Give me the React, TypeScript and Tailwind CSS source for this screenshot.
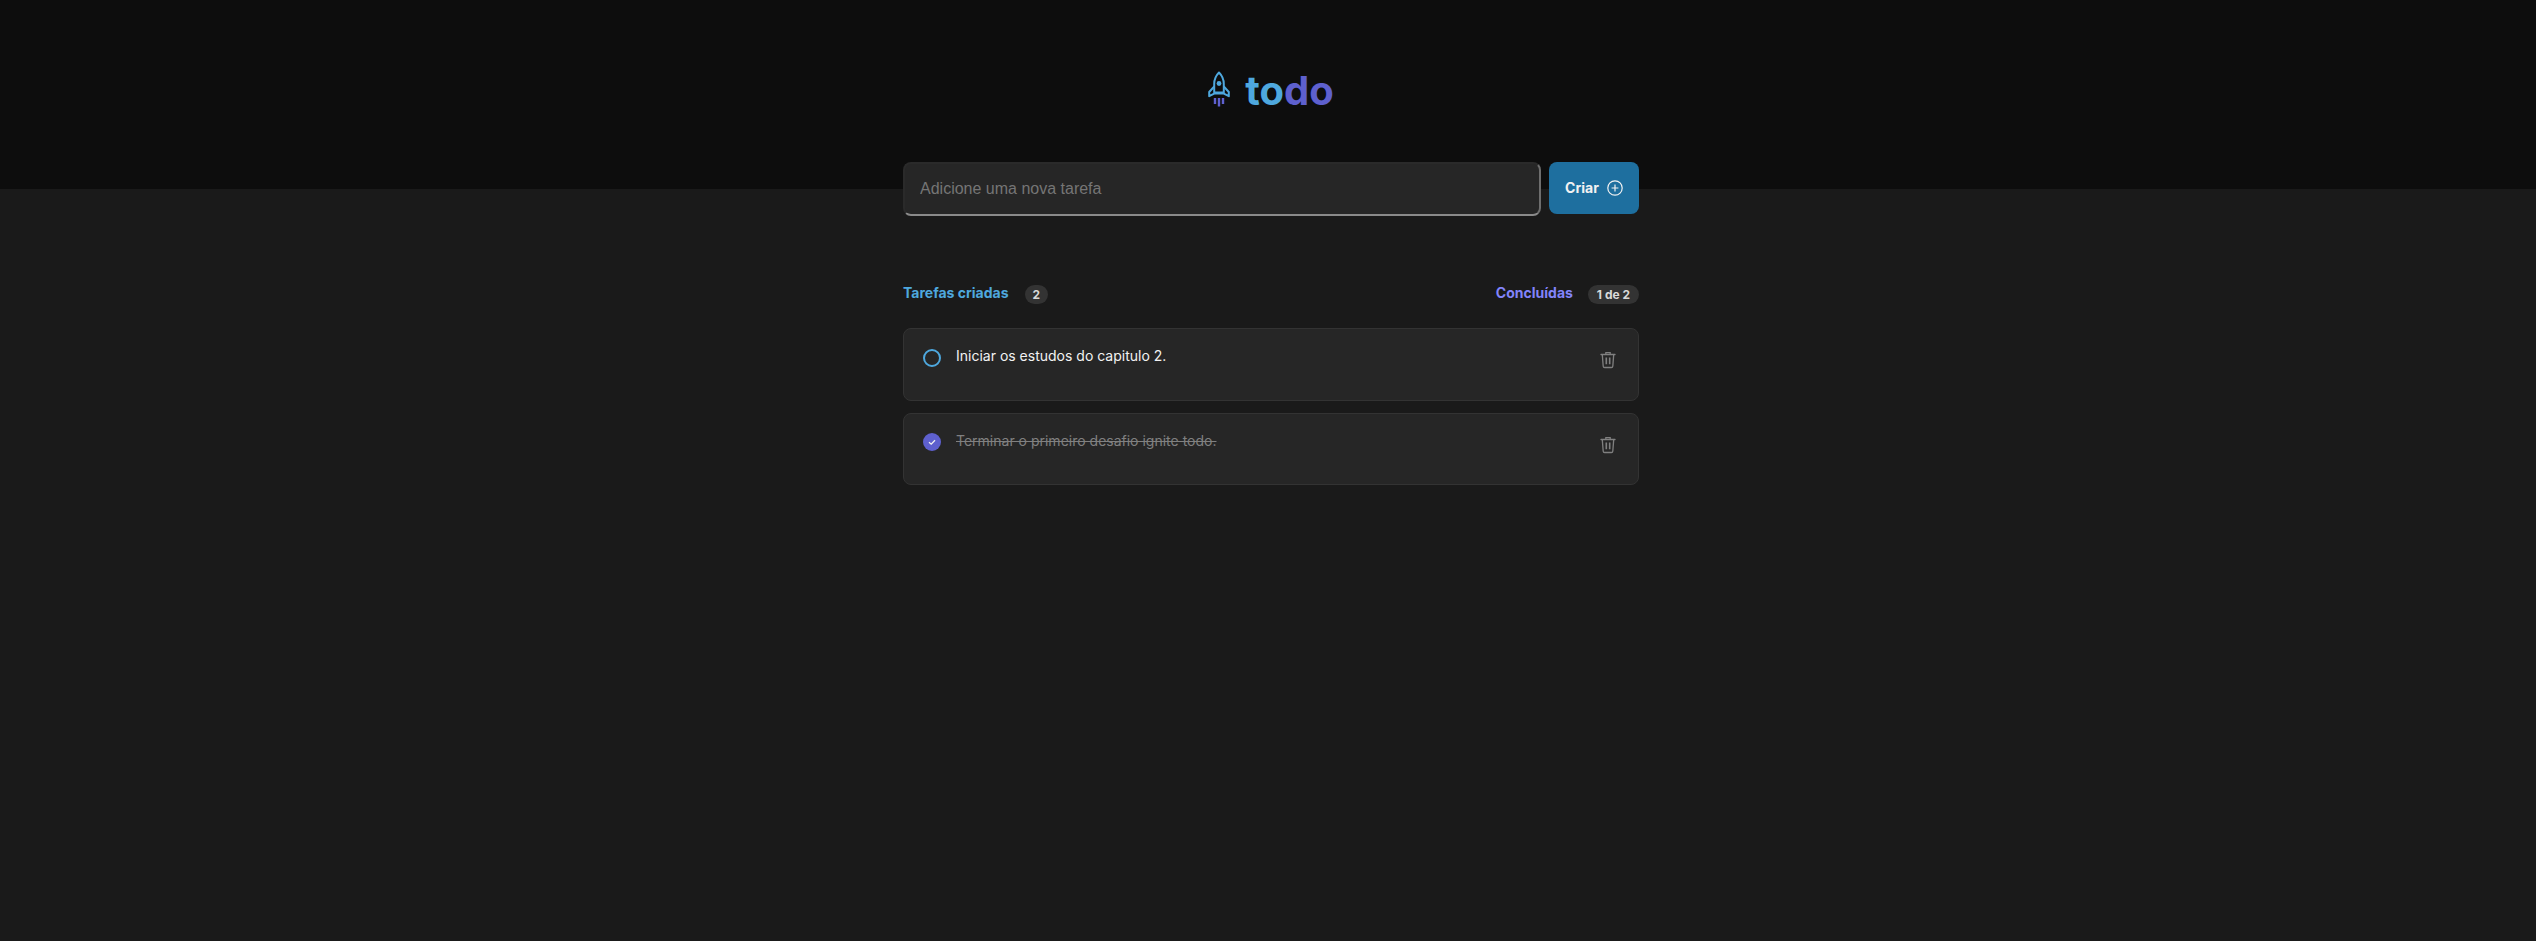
// ── Logo rocket, blue body with purple exhaust ──
function RocketLogo() {
  return (
    <svg width="22" height="36" viewBox="0 0 22 36" fill="none" aria-hidden>
      <path d="M11 1.5C7.5 5 6.2 9 6.2 13v8.5h9.6V13c0-4-1.3-8-4.8-11.5Z" stroke="#4EA8DE" strokeWidth="2" strokeLinejoin="round" />
      <path d="M6.2 15.5 1.2 21v4.2l5-2.6h9.6l5 2.6V21l-5-5.5" stroke="#4EA8DE" strokeWidth="2" strokeLinejoin="round" />
      <circle cx="11" cy="12.5" r="2.4" fill="#4EA8DE" />
      <path d="M7 27v6M11 27v8.5M15 27v6" stroke="#5E60CE" strokeWidth="2.4" />
    </svg>
  )
}

function PlusCircle() {
  return (
    <svg width="16" height="16" viewBox="0 0 16 16" fill="none" aria-hidden>
      <circle cx="8" cy="8" r="7.2" stroke="#F2F2F2" strokeWidth="1.2" />
      <path d="M8 4.6v6.8M4.6 8h6.8" stroke="#F2F2F2" strokeWidth="1.2" />
    </svg>
  )
}

function TrashIcon() {
  return (
    <svg width="16" height="18" viewBox="0 0 16 18" fill="none" aria-hidden>
      <path d="M1 3.5h14" stroke="#808080" strokeWidth="1.3" strokeLinecap="round" />
      <path d="M5.8 3.2V1.6h4.4v1.6" stroke="#808080" strokeWidth="1.2" />
      <path d="M2.3 3.6 3.2 15.2c.1.9.6 1.3 1.4 1.3h6.8c.8 0 1.3-.4 1.4-1.3l.9-11.6" stroke="#808080" strokeWidth="1.3" />
      <path d="M6.3 6.6v6.6M9.7 6.6v6.6" stroke="#808080" strokeWidth="1.6" />
    </svg>
  )
}

function Todo({ text, done }: { text: string; done?: boolean }) {
  return (
    <div className="flex h-[72.5px] items-start rounded-lg border border-[#333333] bg-[#262626] px-[19px] pt-[17px]">
      {done ? (
        <span className="mt-[2px] flex h-[18px] w-[18px] items-center justify-center rounded-full bg-[#5E60CE]">
          <svg width="10" height="10" viewBox="0 0 10 10" fill="none" aria-hidden>
            <path d="M2 5.2 4.2 7.2 8 3.2" stroke="#F2F2F2" strokeWidth="1.3" />
          </svg>
        </span>
      ) : (
        <span className="mt-[3px] h-[18px] w-[18px] rounded-full border-2 border-[#4EA8DE]" />
      )}
      <p className={done ? 'ml-[15px] flex-1 text-sm leading-[20px] text-[#808080] line-through' : 'ml-[15px] flex-1 text-sm leading-[20px] text-[#F2F2F2]'}>
        {text}
      </p>
      <span className="mt-[5px] mr-[3px]">
        <TrashIcon />
      </span>
    </div>
  )
}

export default function App() {
  return (
    <div className="min-h-[941px] bg-[#1A1A1A] font-['Inter',sans-serif]">
      <header className="flex h-[189px] items-start justify-center bg-[#0D0D0D] pt-[71px] pl-[6px]">
        <div className="flex items-start gap-[15px]">
          <RocketLogo />
          <h1 className="text-[40px] leading-[39px] font-bold">
            <span className="text-[#4EA8DE]">to</span>
            <span className="text-[#5E60CE]">do</span>
          </h1>
        </div>
      </header>

      <div className="pl-[6px]">
        <main className="mx-auto w-[736px]">
          <form className="-mt-[27px] flex items-start gap-2">
            <input
              placeholder="Adicione uma nova tarefa"
              className="h-[54px] flex-1 rounded-lg border-2 border-t-[#2a2a2a] border-l-[#2a2a2a] border-r-[#6e6e6e] border-b-[#8a8a8a] bg-[#262626] px-[15px] font-['Liberation_Sans',sans-serif] text-base text-[#F2F2F2] outline-none placeholder:text-[#757575]"
            />
            <button type="button" className="flex h-[52px] w-[90px] items-center justify-center gap-2 rounded-lg bg-[#1E6F9F] text-sm font-bold text-[#F2F2F2]">
              Criar
              <PlusCircle />
            </button>
          </form>

          <div className="mt-[69px] mb-[24px] flex h-[19px] items-center justify-between text-sm font-bold">
            <div className="flex items-center gap-[16px]">
              <span className="-mt-[3px] text-[#4EA8DE]">Tarefas criadas</span>
              <span className="rounded-full bg-[#333333] px-2 py-[2px] text-xs leading-[15px] text-[#D9D9D9]">2</span>
            </div>
            <div className="flex items-center gap-[15px]">
              <span className="-mt-[3px] text-[#8284FA]">Concluídas</span>
              <span className="rounded-full bg-[#333333] px-[9px] py-[2px] text-xs leading-[15px] text-[#D9D9D9]">1 de 2</span>
            </div>
          </div>

          <div className="flex flex-col gap-3">
            <Todo text="Iniciar os estudos do capitulo 2." />
            <Todo text="Terminar o primeiro desafio ignite todo." done />
          </div>
        </main>
      </div>
    </div>
  )
}
